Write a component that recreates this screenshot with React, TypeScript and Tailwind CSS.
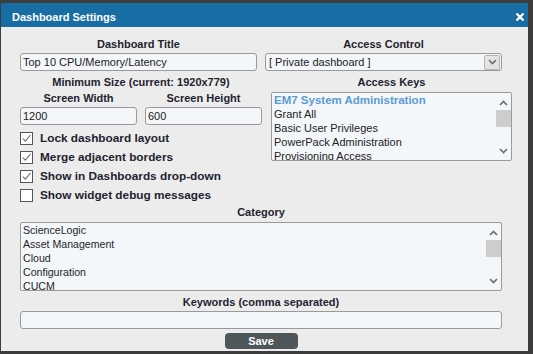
import React from "react";

const font = { fontFamily: '"Liberation Sans", Arial, sans-serif' };

function Chevron({ up }: { up?: boolean }) {
  return (
    <svg width="9" height="6" viewBox="0 0 9 6" className="block">
      <path
        d={up ? "M1 5 L4.5 1.5 L8 5" : "M1 1 L4.5 4.5 L8 1"}
        fill="none"
        stroke="#6b6b6b"
        strokeWidth="1.6"
      />
    </svg>
  );
}

function ListBox({
  items,
  width,
  boldFirst,
  small,
}: {
  items: string[];
  width: string;
  boldFirst?: boolean;
  small?: boolean;
}) {
  return (
    <div
      className={`flex h-[69px] ${width} overflow-hidden rounded-[2px] border border-[#9a9a9a] bg-[#f3f7f9]`}
    >
      <div className="flex-1 overflow-hidden pl-[2px]">
        {items.map((it, i) => (
          <div
            key={it}
            className={
              boldFirst && i === 0
                ? "h-[14px] whitespace-nowrap text-[11.5px] leading-[14px] font-bold text-[#5b9bd5]"
                : small
                ? "h-[14px] whitespace-nowrap text-[10.6px] leading-[14px] text-[#1c1f2a]"
                : "h-[14px] whitespace-nowrap text-[11px] leading-[14px] text-[#222]"
            }
          >
            {it}
          </div>
        ))}
      </div>
      <div className="flex w-[15px] flex-col items-center">
        <div className="flex h-[17px] items-center justify-center pt-[3px]">
          <Chevron up />
        </div>
        <div className="h-[17px] w-[15px] bg-[#cdcdcd]" />
        <div className="flex-1" />
        <div className="flex h-[15px] items-center justify-center pb-[3px]">
          <Chevron />
        </div>
      </div>
    </div>
  );
}

function Check({ checked, label }: { checked: boolean; label: string }) {
  return (
    <div className="flex h-[13px] items-center">
      <div className="flex h-[13px] w-[13px] items-center justify-center border border-[#555] bg-white">
        {checked && (
          <svg width="11" height="11" viewBox="0 0 11 11">
            <path d="M1.8 5.5 L4.3 8.2 L9.5 2" fill="none" stroke="#6a6a6a" strokeWidth="1.1" />
          </svg>
        )}
      </div>
      <span className="ml-[7px] whitespace-nowrap text-[11.8px] leading-[13px] font-bold text-[#1f2330]">
        {label}
      </span>
    </div>
  );
}

const labelCls =
  "h-[13px] text-center text-[11px] leading-[13px] font-bold text-[#1f2330] whitespace-nowrap";
const inputCls =
  "flex h-[18px] items-center rounded-[3px] border border-[#9a9a9a] bg-[#f3f7f9] pl-[2px] text-[11px] text-[#222] whitespace-nowrap";

export default function App() {
  return (
    <div
      style={font}
      className="flex h-[354px] w-[533px] flex-col bg-[#3d3d3d] pt-[3px] pr-[5px] pb-[3px] pl-[1px]"
    >
      <div className="flex flex-1 flex-col bg-[#ececec]">
        {/* Title bar */}
        <div className="flex h-[24px] shrink-0 items-start justify-between bg-[#186ea4] pt-[8px] pr-[3px] pl-[10px]">
          <span className="pl-[1px] text-[11px] leading-[13px] font-bold text-white">
            Dashboard Settings
          </span>
          <svg width="10" height="10" viewBox="0 0 10 10" className="mt-[1px]">
            <path d="M1.5 1.5 L8.5 8.5 M8.5 1.5 L1.5 8.5" stroke="white" strokeWidth="2.4" />
          </svg>
        </div>

        <div className="flex flex-col pl-[19px]">
          {/* Top columns */}
          <div className="mt-[11px] flex">
            {/* Left column */}
            <div className="flex w-[242px] flex-col">
              <div className={`${labelCls} w-[237px]`}>Dashboard Title</div>
              <div className={`${inputCls} mt-[2px] w-[237px] text-[10.3px]`}>
                Top 10 CPU/Memory/Latency
              </div>
              <div className={`${labelCls} mt-[5px] w-[242px] text-[11.4px]`}>
                Minimum Size (current: 1920x779)
              </div>
              <div className="mt-[3px] flex gap-[8px]">
                <div className="flex w-[117px] flex-col">
                  <div className={labelCls}>Screen Width</div>
                  <div className={`${inputCls} mt-[2px]`}>1200</div>
                </div>
                <div className="flex w-[117px] flex-col">
                  <div className={labelCls}>Screen Height</div>
                  <div className={`${inputCls} mt-[2px]`}>600</div>
                </div>
              </div>
              <div className="mt-[7px] flex flex-col gap-[6px]">
                <Check checked label="Lock dashboard layout" />
                <Check checked label="Merge adjacent borders" />
                <Check checked label="Show in Dashboards drop-down" />
                <Check checked={false} label="Show widget debug messages" />
              </div>
            </div>

            {/* Right column */}
            <div className="ml-[3px] flex flex-col">
              <div className={`${labelCls} w-[237px]`}>Access Control</div>
              <div className={`${inputCls} mt-[2px] w-[237px] justify-between pr-[1px] text-[10.6px]`}>
                <span className="pl-[1px]">[ Private dashboard ]</span>
                <div className="flex h-[15px] w-[16px] items-center justify-center rounded-[2px] border border-[#b5b5b5] bg-[#e4e4e4]">
                  <Chevron />
                </div>
              </div>
              <div className={`${labelCls} mt-[5px] ml-[6px] w-[241px]`}>Access Keys</div>
              <div className="mt-[3px] ml-[6px]">
                <ListBox
                  width="w-[241px]"
                  boldFirst
                  items={[
                    "EM7 System Administration",
                    "Grant All",
                    "Basic User Privileges",
                    "PowerPack Administration",
                    "Provisioning Access",
                  ]}
                />
              </div>
            </div>
          </div>

          {/* Category */}
          <div className={`${labelCls} mt-[4px] w-[482px]`}>Category</div>
          <div className="mt-[3px]">
            <ListBox
              width="w-[482px]"
              small
              items={["ScienceLogic", "Asset Management", "Cloud", "Configuration", "CUCM"]}
            />
          </div>

          {/* Keywords */}
          <div className={`${labelCls} mt-[5px] w-[482px]`}>Keywords (comma separated)</div>
          <div className={`${inputCls} mt-[2px] w-[482px]`} />

          <div className="mt-[4px] flex w-[482px] justify-center">
            <button className="h-[16px] w-[73px] rounded-[4px] bg-[#4f5659] text-[11px] leading-[16px] font-bold text-white">
              Save
            </button>
          </div>
        </div>
      </div>
    </div>
  );
}
